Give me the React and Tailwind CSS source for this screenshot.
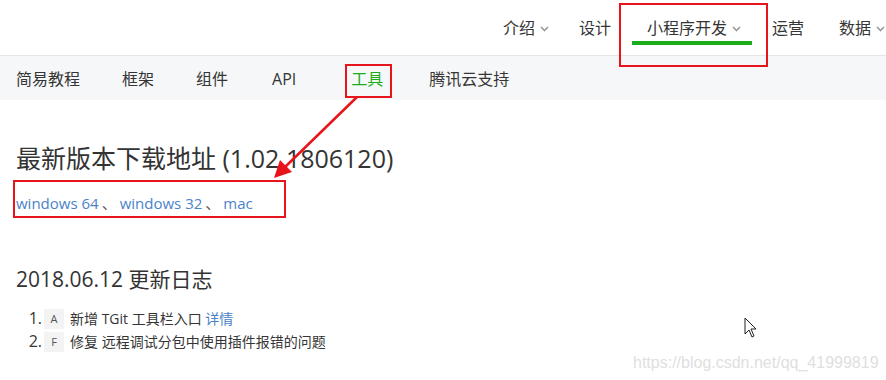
import React from "react";

const ff = { fontFamily: '"Open Sans", "Noto Sans CJK SC", sans-serif' };

const Chevron = () => (
  <svg width="9" height="6" viewBox="0 0 9 6" className="ml-[5px] mt-[2px]">
    <path d="M1 1 L4.5 4.5 L8 1" fill="none" stroke="#9a9a9a" strokeWidth="1.6" />
  </svg>
);

const topNav = [
  { label: "介绍", chevron: true, ml: "ml-[503px]" },
  { label: "设计", ml: "ml-[30px]" },
  { label: "小程序开发", chevron: true, active: true, ml: "ml-[36px]" },
  { label: "运营", ml: "ml-[31px]" },
  { label: "数据", chevron: true, ml: "ml-[35px]" },
];

const subNav = [
  { label: "简易教程", ml: "ml-[16px]" },
  { label: "框架", ml: "ml-[42px]" },
  { label: "组件", ml: "ml-[42px]" },
  { label: "API", ml: "ml-[44px]" },
  { label: "工具", ml: "ml-[55px]", active: true },
  { label: "腾讯云支持", ml: "ml-[46px]" },
];

export default function App() {
  return (
    <div className="relative w-[886px] h-[380px] overflow-hidden bg-white text-[#353535]" style={ff}>
      {/* top nav */}
      <div className="flex h-[56px] items-center border-b border-[#e5e5e5] whitespace-nowrap text-[16px]">
        {topNav.map((it) => (
          <div key={it.label} className={`relative flex items-center shrink-0 ${it.ml}`}>
            <span>{it.label}</span>
            {it.chevron && <Chevron />}
            {it.active && (
              <div className="absolute left-[-15px] top-[25px] w-[120px] h-[4px] bg-[#1aad19]" />
            )}
          </div>
        ))}
      </div>

      {/* sub nav */}
      <div className="flex h-[44px] pt-[2px] items-center bg-[#f6f7f8] text-[16px] whitespace-nowrap">
        {subNav.map((it) => (
          <span key={it.label} className={`${it.ml} ${it.active ? "text-[#1aad19]" : ""}`}>
            {it.label}
          </span>
        ))}
      </div>

      {/* content */}
      <div className="px-[16px]">
        <h1 className="mt-[43px] text-[25px] leading-[30px] text-[#333]">最新版本下载地址 (1.02.1806120)</h1>
        <div className="mt-[20px] text-[15px] leading-[20px] text-[#4a83c8]">
          <a>windows 64</a>
          <span className="text-[#555] mx-[3px]">、</span>
          <a>windows 32</a>
          <span className="text-[#555] mx-[3px]">、</span>
          <a>mac</a>
        </div>
        <h2 className="mt-[53px] text-[21px] leading-[26px] text-[#333]">2018.06.12 更新日志</h2>
        <ol className="mt-[15px] text-[14px] leading-[23px]">
          <li className="flex items-center">
            <span className="w-[26px] text-right text-[16px]">1.</span>
            <span className="ml-[2px] w-[20px] h-[20px] flex items-center justify-center bg-[#f3f3f3] text-[11px] text-[#555]">A</span>
            <span className="ml-[6px]">新增 TGit 工具栏入口 <a className="text-[#4a83c8]">详情</a></span>
          </li>
          <li className="flex items-center">
            <span className="w-[26px] text-right text-[16px]">2.</span>
            <span className="ml-[2px] w-[20px] h-[20px] flex items-center justify-center bg-[#f3f3f3] text-[11px] text-[#555]">F</span>
            <span className="ml-[6px]">修复 远程调试分包中使用插件报错的问题</span>
          </li>
        </ol>
      </div>

      {/* annotations */}
      <div className="absolute left-[619px] top-[3px] w-[149px] h-[64px] border-2 border-[#e8141b]" />
      <div className="absolute left-[345px] top-[64px] w-[47px] h-[34px] border-2 border-[#e8141b]" />
      <div className="absolute left-[13px] top-[180px] w-[273px] h-[38px] border-2 border-[#e8141b]" />
      <svg className="absolute left-0 top-0" width="886" height="380">
        <line x1="357" y1="97" x2="284" y2="168" stroke="#e8141b" strokeWidth="2.5" />
        <polygon points="274,178 280,160 292,172" fill="#e8141b" />
        <path d="M745 318 L745 334 L749 330 L752 337 L754 336 L751 329 L756 329 Z" fill="#fff" stroke="#222" strokeWidth="1" />
      </svg>

      {/* watermark */}
      <div className="absolute left-[633px] top-[351px] text-[16px] text-[#e0e0e0] whitespace-nowrap" style={{ fontFamily: '"Liberation Sans", sans-serif' }}>
        https://blog.csdn.net/qq_41999819
      </div>
    </div>
  );
}
